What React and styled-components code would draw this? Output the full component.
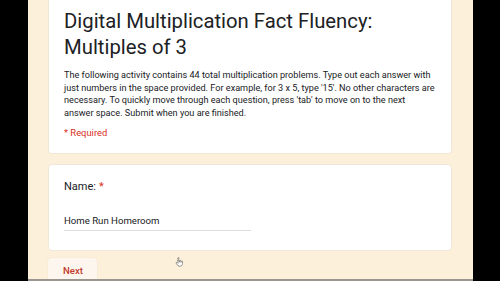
import React from 'react';
import styled, { createGlobalStyle } from 'styled-components';

const GlobalStyle = createGlobalStyle`
  html, body {
    margin: 0;
    padding: 0;
    background: #000;
    overflow: hidden;
  }
  body {
    font-family: Roboto, 'Liberation Sans', Arial, sans-serif;
    color: #202124;
  }
`;

const Screen = styled.div`
  width: 500px;
  height: 281px;
  display: flex;
  justify-content: center;
  background: #000;
  padding-left: 1px;
  box-sizing: border-box;
`;

const Frame = styled.div`
  position: relative;
  width: 445px;
  height: 281px;
  box-sizing: border-box;
  background: #fcf0da;
  border-bottom: 2px solid #9a968f;
  padding: 0 21px 0 20px;
  overflow: hidden;
`;

const Card = styled.section`
  background: #fff;
  border: 1px solid #f0e7d8;
  border-top: ${p => (p.$first ? 'none' : '1px solid #f0e7d8')};
  border-radius: ${p => (p.$first ? '0 0 4px 4px' : '4px')};
  padding: ${p => p.$pad};
  margin-bottom: ${p => p.$gap || '0'};
`;

const Title = styled.h1`
  margin: 0;
  font-size: 20.3px;
  line-height: 26px;
  font-weight: 400;
  color: #202124;
`;

const Description = styled.p`
  margin: 9px 0 0;
  font-size: 9.15px;
  line-height: 12.7px;
  color: #202124;
  white-space: nowrap;
`;

const Required = styled.div`
  margin-top: 7px;
  font-size: 9.4px;
  line-height: 12px;
  color: #d93025;
`;

const Label = styled.div`
  font-size: 11px;
  line-height: 14px;
  color: #202124;
  span {
    color: #d93025;
    margin-left: 3px;
  }
`;

const Answer = styled.div`
  margin-top: 20px;
  width: 187px;
  height: 16px;
  font-size: 9.6px;
  line-height: 14px;
  color: #202124;
  border-bottom: 1px solid #dcdcdc;
`;

const NextButton = styled.button`
  margin-top: 7px;
  height: 26px;
  padding: 0 14px 0 15px;
  border: none;
  border-radius: 4px;
  background: #fdf6ee;
  box-shadow: 0 0 2px rgba(0, 0, 0, 0.06);
  color: #c23a2c;
  font-family: inherit;
  font-size: 9.6px;
  font-weight: 500;
  line-height: 21px;
  text-align: left;
  vertical-align: top;
  display: block;
  cursor: pointer;
`;

const Cursor = styled.svg`
  position: absolute;
  left: 147px;
  top: 257px;
`;

export default function App() {
  return (
    <>
      <GlobalStyle />
      <Screen>
        <Frame>
          <Card $first $pad="8px 15px 14px" $gap="10px">
            <Title>
              Digital Multiplication Fact Fluency:
              <br />
              Multiples of 3
            </Title>
            <Description>
              The following activity contains 44 total multiplication problems. Type out each answer with
              <br />
              just numbers in the space provided. For example, for 3 x 5, type '15'. No other characters are
              <br />
              necessary. To quickly move through each question, press 'tab' to move on to the next
              <br />
              answer space. Submit when you are finished.
            </Description>
            <Required>* Required</Required>
          </Card>
          <Card $pad="15px 15px 19px">
            <Label>
              Name:<span>*</span>
            </Label>
            <Answer>Home Run Homeroom</Answer>
          </Card>
          <NextButton>Next</NextButton>
          <Cursor width="9" height="10" viewBox="0 0 9 10">
            <path
              d="M3 1.2 v4.3 M3 3.6 c0-1 1.6-1 1.6 0 v1.4 M4.6 4.2 c0-0.9 1.5-0.9 1.5 0 v1 M6.1 4.6 c0-0.8 1.4-0.8 1.4 0 v2 c0 1.6-1 2.6-2.6 2.6 h-0.6 c-1 0-1.6-0.6-2.1-1.4 L1.2 6.2 c-0.4-0.7 0.5-1.3 1.1-0.7 L3 6.2 M3 1.2 c0-0.9 1.3-0.9 1.3 0"
              fill="#fff"
              stroke="#777"
              strokeWidth="0.8"
              strokeLinecap="round"
              strokeLinejoin="round"
            />
          </Cursor>
        </Frame>
      </Screen>
    </>
  );
}
